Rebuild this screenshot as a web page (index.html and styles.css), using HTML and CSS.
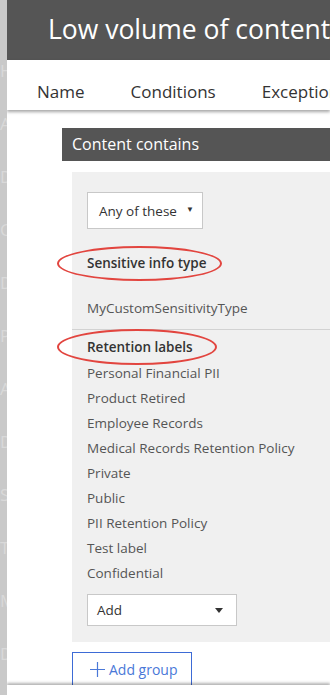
FILE: index.html
```html
<!DOCTYPE html>
<html lang="en">
<head>
    <meta charset="UTF-8">
    <meta name="viewport" content="width=device-width, initial-scale=1.0">
    <title>Low volume of content</title>
    <link rel="stylesheet" href="styles.css">
</head>
<body>
    <div class="backdrop">
        <span>Ho</span>
        <span>Al</span>
        <span>De</span>
        <span>Cl</span>
        <span>Da</span>
        <span>Po</span>
        <span>Al</span>
        <span>Da</span>
        <span>Su</span>
        <span>Th</span>
        <span>M</span>
        <span>Da</span>
    </div>

    <div class="flyout">
        <div class="header">
            <h1>Low volume of content</h1>
        </div>

        <div class="tabs">
            <span>Name</span>
            <span>Conditions</span>
            <span>Exceptions</span>
        </div>

        <div class="body">
            <div class="section-title">Content contains</div>

            <div class="group">
                <div class="select small">
                    <span>Any of these</span>
                    <span class="caret">&#9660;</span>
                </div>

                <div class="label-row first"><span class="circled">Sensitive info type</span></div>
                <div class="item single">MyCustomSensitivityType</div>

                <div class="divider"></div>

                <div class="label-row"><span class="circled second">Retention labels</span></div>
                <ul class="items">
                    <li>Personal Financial PII</li>
                    <li>Product Retired</li>
                    <li>Employee Records</li>
                    <li>Medical Records Retention Policy</li>
                    <li>Private</li>
                    <li>Public</li>
                    <li>PII Retention Policy</li>
                    <li>Test label</li>
                    <li>Confidential</li>
                </ul>

                <div class="select wide">
                    <span>Add</span>
                    <svg class="down" width="8" height="5" viewBox="0 0 8 5"><path d="M0 0h8L4 5z" fill="#333"/></svg>
                </div>
            </div>

            <button class="add-group">
                <svg width="15" height="15" viewBox="0 0 15 15"><path d="M7.5 0v15M0 7.5h15" stroke="#4a78d8" stroke-width="1.2"/></svg>
                Add group
            </button>
        </div>

        <div class="footer"></div>
    </div>
</body>
</html>
```

FILE: styles.css
```css
body {
    margin: 0;
    width: 330px;
    height: 695px;
    overflow: hidden;
    display: flex;
    font-family: "Open Sans", "Noto Sans", sans-serif;
    background-color: #fff;
}
.backdrop {
    width: 7px;
    flex-shrink: 0;
    background-color: #c9c9c9;
    overflow: hidden;
    display: flex;
    flex-direction: column;
    padding-top: 60px;
    gap: 31px;
    color: #d9d9d9;
    font-size: 17px;
    line-height: 22px;
}
.flyout {
    flex: 1;
    display: flex;
    flex-direction: column;
    overflow: hidden;
    position: relative;
}
.header {
    height: 60px;
    background-color: #555;
    flex-shrink: 0;
}
.header h1 {
    margin: 0;
    padding: 11px 0 0 41px;
    font-size: 26.5px;
    font-weight: 400;
    line-height: 36px;
    color: #fff;
    white-space: nowrap;
}
.tabs {
    height: 50px;
    box-sizing: border-box;
    flex-shrink: 0;
    display: flex;
    gap: 46px;
    padding: 12px 0 0 30px;
    align-items: center;
    white-space: nowrap;
    font-size: 17px;
    color: #333;
    box-shadow: 0 2px 3px rgba(0,0,0,0.35);
    position: relative;
}
.body {
    flex: 1;
    padding: 18px 0 0 55px;
}
.section-title {
    height: 33px;
    line-height: 33px;
    background-color: #555;
    color: #fff;
    padding-left: 10px;
    font-size: 16px;
}
.group {
    margin: 11px 0 0 10px;
    background-color: #f0f0f0;
    padding: 20px 0 16px 15px;
}
.select {
    background-color: #fff;
    border: 1px solid #c8c8c8;
    box-sizing: border-box;
    display: flex;
    align-items: center;
    justify-content: space-between;
    font-size: 13.5px;
    color: #333;
}
.select.small {
    width: 116px;
    height: 37px;
    padding: 0 8px 0 11px;
}
.select.small .caret {
    font-size: 8px;
    margin-top: -4px;
}
.select.wide {
    width: 150px;
    height: 32px;
    padding: 0 13px 0 9px;
    margin-top: 8px;
}
.label-row {
    font-size: 13.5px;
    font-weight: 600;
    color: #333;
    line-height: 20px;
}
.label-row.first {
    margin-top: 24px;
}
.circled {
    position: relative;
}
.circled::before {
    content: "";
    position: absolute;
    left: -30px;
    top: -8px;
    width: 165px;
    height: 35px;
    border: 2.5px solid #e2453f;
    border-radius: 50%;
    box-sizing: border-box;
}
.circled.second::before {
    width: 160px;
    top: -9px;
    height: 36px;
}
.item {
    font-size: 13.5px;
    color: #555;
    line-height: 20px;
}
.item.single {
    margin-top: 25px;
}
.divider {
    height: 1px;
    background-color: #d2d2d2;
    margin: 11px 0 7px -15px;
}
.items {
    list-style: none;
    margin: 4px 0 0;
    padding: 0;
}
.items li {
    font-size: 13.5px;
    color: #555;
    line-height: 25px;
}
.add-group {
    margin: 10px 0 0 10px;
    width: 120px;
    height: 36px;
    background-color: #fff;
    border: 1px solid #3d6bd6;
    display: flex;
    align-items: center;
    gap: 4px;
    padding: 0 0 2px 17px;
    font-family: inherit;
    font-size: 14px;
    color: #4a78d8;
}
.footer {
    position: absolute;
    left: 0;
    right: 0;
    bottom: 0;
    height: 10px;
    background-color: #fff;
    box-shadow: 0 -2px 3px rgba(0,0,0,0.3);
}
```
